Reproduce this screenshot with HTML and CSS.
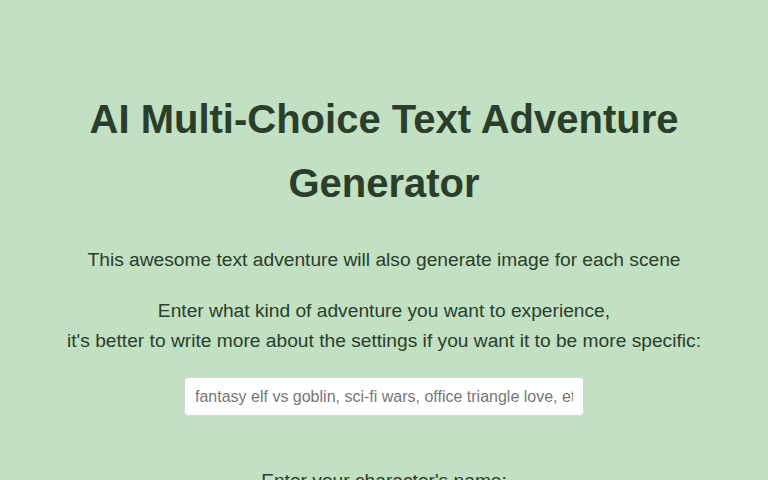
FILE: index.html
```html
<!DOCTYPE html>
<html>
<head>
  <title>AI Multi-Choice Text Adventure Generator</title>
  <link rel="stylesheet" href="styles.css">
</head>
<body>
  <div class="container">
    <h1>AI Multi-Choice Text Adventure Generator</h1>
    <p class="intro">This awesome text adventure will also generate image for each scene</p>

    <form id="adventureForm">
      <label for="setting">Enter what kind of adventure you want to experience,<br>it's better to write more about the settings if you want it to be more specific:</label>
      <input id="setting" placeholder="fantasy elf vs goblin, sci-fi wars, office triangle love, etc." />

      <label for="charName" class="name-label">Enter your character's name:</label>
      <input id="charName" placeholder="Your name" />
    </form>
  </div>
</body>
</html>
```

FILE: styles.css
```css
body {
  margin: 0;
  background: #c2e0c2;
  color: #2b3d2b;
  font-family: "Liberation Sans", Arial, sans-serif;
}
.container { max-width: 720px; margin: 0 auto; padding: 87px 20px 40px; text-align: center; }
h1 { font-size: 40px; line-height: 64px; margin: 0 0 30px; }
.intro { font-size: 19.2px; line-height: 30px; margin: 0 0 21px; }
form { display: flex; flex-direction: column; align-items: center; }
label { display: block; font-size: 19.2px; line-height: 30px; }
input {
  box-sizing: border-box;
  width: 400px;
  height: 39px;
  margin: 21px 0 50px;
  padding: 8px 10px;
  font-size: 16px;
  font-family: "Liberation Sans", Arial, sans-serif;
  border: 1px solid #d6d6d6;
  border-radius: 4px;
  background: white;
}
input::placeholder { color: #777; }
```
